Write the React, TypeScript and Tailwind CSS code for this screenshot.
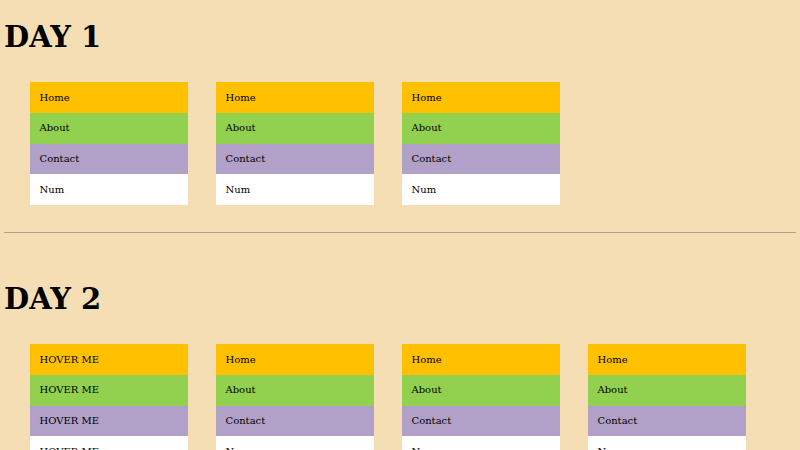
import React from 'react';

const day1 = [
  ['Home', 'About', 'Contact', 'Num'],
  ['Home', 'About', 'Contact', 'Num'],
  ['Home', 'About', 'Contact', 'Num'],
];

const day2 = [
  ['HOVER ME', 'HOVER ME', 'HOVER ME', 'HOVER ME'],
  ['Home', 'About', 'Contact', 'Num'],
  ['Home', 'About', 'Contact', 'Num'],
  ['Home', 'About', 'Contact', 'Num'],
];

const rowColors = ['bg-[#ffc000]', 'bg-[#92d050]', 'bg-[#b1a0c7]', 'bg-white'];

const Menu: React.FC<{ items: string[] }> = ({ items }) => (
  <ul className="w-[158px] flex flex-col">
    {items.map((item, i) => (
      <li key={i} className={`${rowColors[i]} pl-[9.5px] pr-[10px] pt-[9.5px] pb-[8.5px] text-[10px] leading-[12.75px] text-black`}>
        {item}
      </li>
    ))}
  </ul>
);

export default function App() {
  return (
    <div className="min-h-screen bg-[#f5deb3] px-[4px] pb-10 font-['DejaVu_Serif',serif] text-black">
      <section>
        <h1 className="pt-[16px] text-[29px] leading-[43px] font-bold">DAY 1</h1>
        <div className="mt-[23px] ml-[26px] flex gap-[28px]">
          {day1.map((m, i) => (
            <Menu key={i} items={m} />
          ))}
        </div>
      </section>

      <hr className="mt-[27px] border-t border-[#a9a49a]" />

      <section>
        <h1 className="pt-[45px] text-[29px] leading-[43px] font-bold">DAY 2</h1>
        <div className="mt-[23px] ml-[26px] flex gap-[28px]">
          {day2.map((m, i) => (
            <Menu key={i} items={m} />
          ))}
        </div>
      </section>
    </div>
  );
}
